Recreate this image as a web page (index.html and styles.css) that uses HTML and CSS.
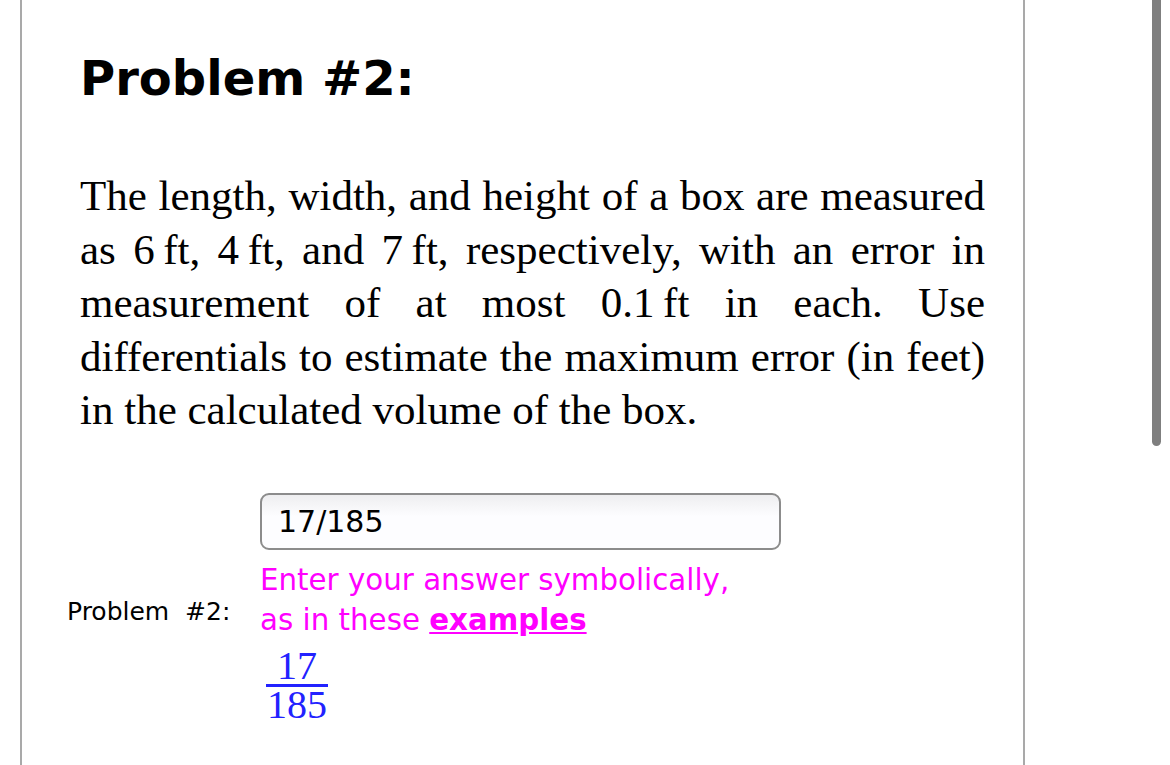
FILE: index.html
```html
<!DOCTYPE html>
<html>
<head>
<meta charset="utf-8">
<link rel="stylesheet" href="styles.css">
</head>
<body>
<div class="page">
  <h1 class="title">Problem #2:</h1>
  <p class="statement">The length, width, and height of a box are measured as 6&#8201;ft, 4&#8201;ft, and 7&#8201;ft, respectively, with an error in measurement of at most 0.1&#8201;ft in each. Use differentials to estimate the maximum error (in feet) in the calculated volume of the box.</p>
  <div class="answer-row">
    <div class="label">Problem&nbsp; #2:</div>
    <div class="answer-cell">
      <div class="input">17/185</div>
      <div class="hint">Enter your answer symbolically,<br>as in these <a class="examples">examples</a></div>
      <div class="frac">
        <span class="num">17</span>
        <span class="den">185</span>
      </div>
    </div>
  </div>
</div>
<div class="scrollbar"></div>
</body>
</html>
```
FILE: styles.css
```css
html, body {
  margin: 0;
  padding: 0;
  background: #ffffff;
  overflow: hidden;
}
.page {
  margin-left: 20px;
  width: 1005px;
  min-height: 800px;
  border-left: 2px solid #a9a9a9;
  border-right: 2px solid #a9a9a9;
  box-sizing: border-box;
  padding-top: 1px;
}
.title {
  font-family: "DejaVu Sans", Verdana, sans-serif;
  font-weight: bold;
  font-size: 48px;
  line-height: 56px;
  margin: 49px 0 0 58px;
  color: #000;
}
.statement {
  font-family: "Liberation Serif", "Times New Roman", serif;
  font-size: 43px;
  line-height: 53.5px;
  text-align: justify;
  width: 905px;
  margin: 63px 0 0 58px;
  color: #000;
}
.answer-row {
  display: flex;
  align-items: center;
  margin-top: 56px;
  margin-left: 45px;
}
.label {
  font-family: "DejaVu Sans", Verdana, sans-serif;
  font-size: 25px;
  width: 193px;
  color: #000;
  padding-top: 8px;
}
.answer-cell {
  display: flex;
  flex-direction: column;
}
.input {
  width: 521px;
  height: 57px;
  box-sizing: border-box;
  border: 2px solid #8c8c8c;
  border-radius: 9px;
  background: linear-gradient(#eeeef0, #fdfdff 40%);
  font-family: "DejaVu Sans", Verdana, sans-serif;
  font-size: 30px;
  line-height: 53px;
  padding-left: 16px;
  color: #000;
}
.hint {
  font-family: "DejaVu Sans", Verdana, sans-serif;
  font-size: 29.3px;
  line-height: 40px;
  color: #ff00ff;
  margin-top: 10px;
}
.examples {
  font-weight: bold;
  text-decoration: underline;
  color: #ff00ff;
}
.frac {
  display: inline-flex;
  flex-direction: column;
  align-items: center;
  align-self: flex-start;
  margin-left: 6px;
  margin-top: 8px;
  font-family: "Liberation Serif", "Times New Roman", serif;
  font-size: 40px;
  line-height: 36px;
  color: #2222ff;
}
.num {
  padding: 0 4px;
}
.den {
  border-top: 3px solid #2222ff;
  padding: 0 1px;
}
.scrollbar {
  position: absolute;
  left: 1152px;
  top: 0;
  width: 9px;
  height: 446px;
  background: #7f7f7f;
  border-radius: 0 0 5px 5px;
}
```
